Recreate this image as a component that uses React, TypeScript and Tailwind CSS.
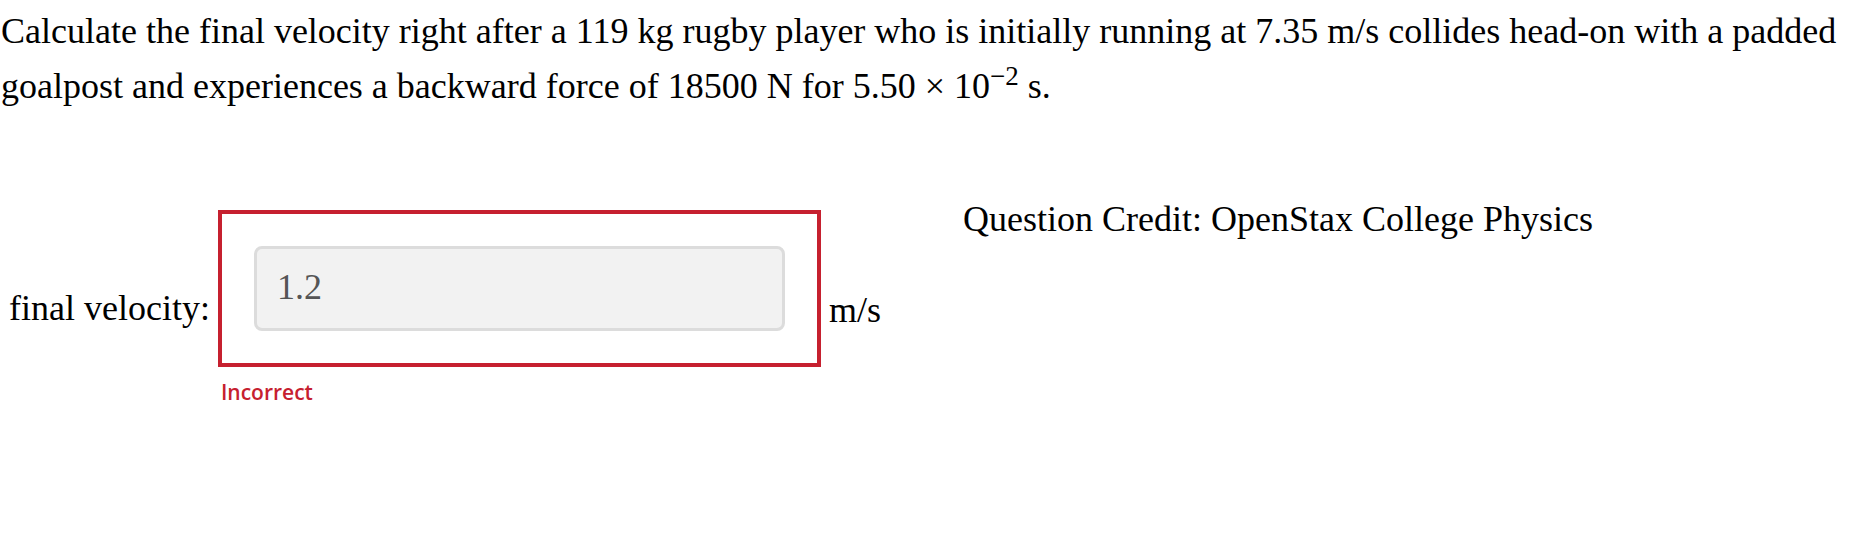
export default function App() {
  return (
    <div className="w-[1852px] h-[538px] bg-white text-black font-['Liberation_Serif','Times_New_Roman',serif]">
      <p className="pt-[4px] pl-[1px] text-[36px] leading-[55px]">
        Calculate the final velocity right after a 119 kg rugby player who is initially running at 7.35 m/s collides head-on with a padded goalpost and experiences a backward force of 18500 N for 5.50 × 10<sup>−2</sup> s.
      </p>

      <div className="mt-[78px] flex items-start">
        <div className="mt-[18px] w-[955px] shrink-0">
          <div className="flex items-start">
            <span className="ml-[9px] pt-[71px] text-[36px] leading-[55px]">final velocity:</span>
            <div className="ml-[8px] flex flex-col">
              <div className="border-[4px] border-[#c6202f] p-[32px]">
                <input
                  readOnly
                  value="1.2"
                  className="w-[531px] h-[85px] rounded-[8px] border-[3px] border-[#dcdcdc] bg-[#f2f2f2] px-[20px] pb-[3px] text-[36px] text-[#555] font-['Liberation_Serif','Times_New_Roman',serif] outline-none"
                />
              </div>
              <span className="mt-[11px] ml-[3px] text-[21px] font-semibold leading-[28px] text-[#c6202f] font-['Open_Sans',sans-serif]">
                Incorrect
              </span>
            </div>
            <span className="ml-[8px] pt-[73px] text-[36px] leading-[55px]">m/s</span>
          </div>
        </div>
        <div className="ml-[8px] text-[36px] leading-[55px]">Question Credit: OpenStax College Physics</div>
      </div>
    </div>
  );
}
